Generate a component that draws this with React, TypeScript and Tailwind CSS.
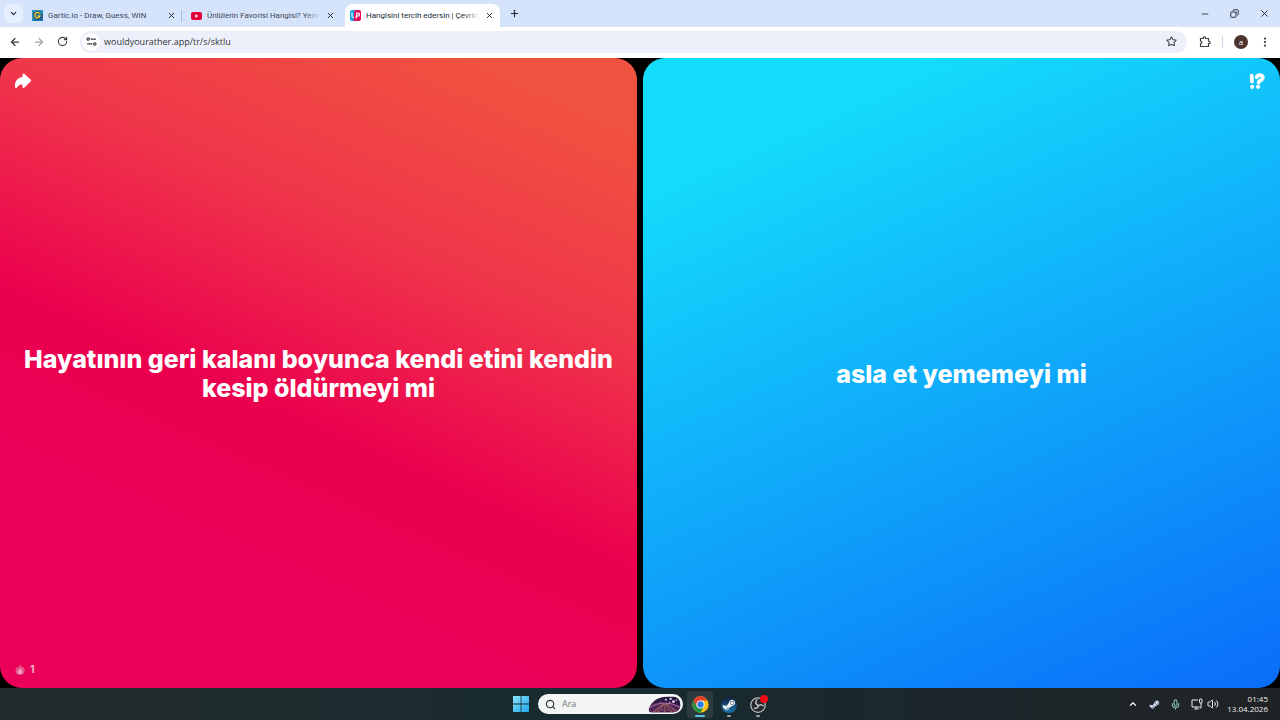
import { useState } from 'react'
import { ArrowLeft, ArrowRight, ChevronDown, ChevronUp, Copy, EllipsisVertical, Mic, Minus, Plus, RotateCw, Search, Star, Volume2, X } from 'lucide-react'
import { FaSteamSymbol } from 'react-icons/fa'
import clsx from 'clsx'

const tabs = [
  { id: 'gartic', title: 'Gartic.io - Draw, Guess, WIN' },
  { id: 'youtube', title: 'Ünlülerin Favorisi Hangisi? Yem' },
  { id: 'wyr', title: 'Hangisini tercih edersin | Çevrin' },
]

function Favicon({ id }: { id: string }) {
  if (id === 'gartic') {
    return (
      <svg viewBox="0 0 20 20" className="size-[11px] shrink-0" aria-hidden="true">
        <rect width="20" height="20" fill="#2b93bb" />
        <path d="M0 20 L20 5 V20 Z" fill="#1e6ca8" />
        <path d="M14 6.8 A4.8 4.8 0 1 0 14.5 11 H10.5" fill="none" stroke="#1b3040" strokeWidth="5" />
        <path d="M14 6.8 A4.8 4.8 0 1 0 14.5 11 H10.5" fill="none" stroke="#f5d648" strokeWidth="2.5" />
      </svg>
    )
  }
  if (id === 'youtube') {
    return (
      <svg viewBox="0 0 22 16" className="h-2 w-[11px] shrink-0" aria-hidden="true">
        <rect width="22" height="16" rx="4" fill="#e6003d" />
        <path d="M8.5 4.5 L15 8 L8.5 11.5 Z" fill="#fff" />
      </svg>
    )
  }
  return (
    <svg viewBox="0 0 22 22" className="size-[11px] shrink-0" aria-hidden="true">
      <rect width="12" height="22" rx="4" fill="#16a6ee" />
      <path d="M9 0 H18 A4 4 0 0 1 22 4 V18 A4 4 0 0 1 18 22 H7 Z" fill="#e80a58" />
      <path d="M4 5 V13 Q5 17 8 14" fill="none" stroke="#fff" strokeWidth="2" />
      <path d="M12 17 L14 6 H16 A3 3 0 0 1 16 12 H13" fill="none" stroke="#fff" strokeWidth="2.5" />
    </svg>
  )
}

function TabStrip() {
  const [active, setActive] = useState('wyr')

  return (
    <div className="flex h-[27px] items-center bg-[#d5e3fb] pl-1 text-[#202734]">
      <button type="button" aria-label="Search tabs" className="mr-1 flex size-[19px] items-center justify-center rounded-md bg-[#e6effd]">
        <ChevronDown className="size-[9px]" strokeWidth={3} />
      </button>
      <div className="flex items-center gap-1 self-end">
        {tabs.map((tab) => (
          <div
            key={tab.id}
            className={clsx(
              'relative flex h-[23px] w-[155px] items-center gap-1 pr-[5px] pl-[5px]',
              active === tab.id ? 'rounded-t-lg bg-white' : 'text-[#3f4858]'
            )}
          >
            <button type="button" onClick={() => setActive(tab.id)} className="flex min-w-0 flex-1 items-center gap-[5px] text-left">
              <Favicon id={tab.id} />
              <span className="flex-1 font-['Roboto','Noto_Sans',sans-serif] text-[8px] leading-3 whitespace-nowrap">{tab.title}</span>
            </button>
            {/* long titles fade out before the close button */}
            {tab.id !== 'gartic' && (
              <span
                className={clsx(
                  'pointer-events-none absolute right-5 h-3 w-4 bg-linear-to-r',
                  active === tab.id ? 'from-white/0 to-white' : 'from-[#d5e3fb]/0 to-[#d5e3fb]'
                )}
              />
            )}
            <button type="button" aria-label={`Close ${tab.title}`} className="flex size-3 items-center justify-center text-[#202734]">
              <X className="size-[9px]" strokeWidth={2.5} />
            </button>
            {tab.id === 'gartic' && <span className="absolute right-0 h-3 w-px bg-[#a9bbd8]" />}
          </div>
        ))}
      </div>
      <button type="button" aria-label="New tab" className="ml-2 flex size-3 items-center justify-center">
        <Plus className="size-[11px]" strokeWidth={2.5} />
      </button>
      <div className="ml-auto flex items-center gap-5 pr-[10px]">
        <button type="button" aria-label="Minimize"><Minus className="size-[10px]" /></button>
        <button type="button" aria-label="Restore"><Copy className="size-[9px] rotate-90" strokeWidth={2.5} /></button>
        <button type="button" aria-label="Close window"><X className="size-[11px]" /></button>
      </div>
    </div>
  )
}

function Toolbar() {
  return (
    <div className="flex h-[31px] items-center bg-white px-[9px] pb-[2px] text-[#3c3f44]">
      <div className="flex items-center gap-3">
        <button type="button" aria-label="Back"><ArrowLeft className="size-3" strokeWidth={2.5} /></button>
        <button type="button" aria-label="Forward" className="text-[#a4a6aa]"><ArrowRight className="size-3" strokeWidth={2.5} /></button>
        <button type="button" aria-label="Reload"><RotateCw className="size-[11px]" strokeWidth={2.5} /></button>
      </div>
      <div className="ml-3 flex h-[22px] flex-1 items-center rounded-full bg-[#edf0fa] pr-[10px] pl-[2px]">
        <button type="button" aria-label="Site information" className="flex size-[18px] items-center justify-center rounded-full bg-white">
          <svg viewBox="0 0 20 20" className="size-[11px]" fill="none" stroke="currentColor" strokeWidth="2.2" aria-hidden="true">
            <circle cx="4" cy="5.5" r="2.2" />
            <path d="M8.5 5.5 H18 M2 14.5 H11.5" />
            <circle cx="16" cy="14.5" r="2.2" />
          </svg>
        </button>
        <input
          aria-label="Address"
          defaultValue="wouldyourather.app/tr/s/sktlu"
          className="ml-1 min-w-0 flex-1 bg-transparent text-[9px] leading-4 text-[#33363b] outline-none"
        />
        <button type="button" aria-label="Bookmark"><Star className="size-[11px]" strokeWidth={2.2} /></button>
      </div>
      <div className="ml-3 flex items-center">
        <button type="button" aria-label="Extensions">
          <svg viewBox="0 0 24 24" className="size-3" fill="none" stroke="currentColor" strokeWidth="2.4" aria-hidden="true">
            <path d="M3 5 H8.500 V4 A2 2 0 0 1 13 4 V5 H19 V10.500 H20 A2 2 0 0 1 20 15 H19 V21 H3 V15.500 A2.500 2.500 0 0 0 3 10.500 Z" />
          </svg>
        </button>
        <span className="mx-[11px] h-3 w-px bg-[#cfd6e6]" />
        <button type="button" aria-label="Profile" className="flex size-[14px] items-center justify-center rounded-full bg-[#4e342e] text-[8px] leading-none text-white">a</button>
        <button type="button" aria-label="Menu" className="ml-[11px]"><EllipsisVertical className="size-3" strokeWidth={2.5} /></button>
      </div>
    </div>
  )
}

function Choices() {
  return (
    <main className="grid flex-1 grid-cols-2 gap-[6px] bg-black font-['Inter',sans-serif] text-white">
      <section className="relative flex rounded-[22px] bg-[linear-gradient(204deg,#f1523f_8%,#f0364a_32%,#eb004e_56%,#ea0059_78%)]">
        <button type="button" className="flex flex-1 items-center justify-center px-4 pt-[2px] text-center text-[25px] leading-[29px] font-extrabold">
          Hayatının geri kalanı boyunca kendi etini kendin kesip öldürmeyi mi
        </button>
        <button type="button" aria-label="Share" className="absolute top-[15px] left-[15px]">
          <svg viewBox="0 0 32 32" className="size-4" aria-hidden="true">
            <path d="M15 3 Q16 0 19 2 L31 13 Q33 15 31 17 L19 29 Q16 31 15 28 V23 C9 22 6 25 4 29 Q1 32 0 28 C-1 17 5 9 15 8 Z" fill="currentColor" />
          </svg>
        </button>
        <div className="absolute bottom-3 left-[15px] flex items-center gap-[5px] text-[11px] leading-[14px] font-semibold text-white/75">
          <svg viewBox="0 0 20 22" className="h-[11px] w-[10px]" aria-hidden="true">
            <path d="M9 0 C11 4 14 5 14 8 L16 5 C19 9 20 12 19 15 C18 20 14 22 10 22 C5 22 1 19 1 14 C1 10 3 8 4 5 L6 9 C8 6 9 4 9 0 Z" fill="#e0588c" />
            <path d="M10 8 C12 12 16 13 15 17 C13 21 6 21 5 17 C5 14 9 12 10 8 Z" fill="#f79cc0" />
          </svg>
          1
        </div>
      </section>
      <section className="relative flex rounded-[22px] bg-[linear-gradient(156deg,#14dcfb_14%,#0a6cf9_100%)]">
        <button type="button" className="flex flex-1 items-center justify-center px-4 pt-[2px] text-center text-[25px] leading-[29px] font-extrabold">
          asla et yememeyi mi
        </button>
        <button type="button" aria-label="Question info" className="absolute top-[15px] right-[15px]">
          <svg viewBox="0 0 30 30" className="size-4" fill="none" stroke="currentColor" aria-hidden="true">
            <path d="M5 5 L5.500 16" strokeWidth="7" strokeLinecap="round" />
            <path d="M14.500 8 C16 2 26 3 26 9 C26 14 18.500 13 18 18" strokeWidth="7" strokeLinecap="round" />
            <circle cx="6" cy="26" r="4" fill="currentColor" stroke="none" />
            <circle cx="17" cy="26" r="4" fill="currentColor" stroke="none" />
          </svg>
        </button>
      </section>
    </main>
  )
}

function SearchArt() {
  return (
    <svg viewBox="0 0 70 36" className="h-[17px] w-[35px] shrink-0" aria-hidden="true">
      <clipPath id="art"><path d="M2 28 C8 8 26 1 44 1 H52 A17 17 0 0 1 52 35 H8 Q1 34 2 28 Z" /></clipPath>
      <g clipPath="url(#art)">
        <rect width="70" height="36" fill="#2a1842" />
        <path d="M0 18 Q34 8 70 20 V36 H0 Z" fill="#4c2658" />
        <path d="M2 25 Q34 5 68 24" fill="none" stroke="#b878ad" strokeWidth="2" />
        <path d="M33 17 L8 36 M34 17 L20 36 M36 17 V36 M38 17 L51 36 M40 17 L66 36" stroke="#dc8c66" strokeWidth="1.500" />
        <path d="M12 34 Q36 22 62 34" fill="none" stroke="#7e3d55" strokeWidth="3" />
        <g fill="#e4d2f6"><circle cx="38" cy="8" r="2" /><circle cx="48" cy="6" r="2.500" /><circle cx="54" cy="12" r="3" /><circle cx="46" cy="13" r="1.500" /><circle cx="60" cy="9" r="1.500" /><circle cx="26" cy="12" r="1" /></g>
      </g>
    </svg>
  )
}

function ChromeLogo() {
  return (
    <svg viewBox="0 0 48 48" className="size-[17px]" aria-hidden="true">
      <circle cx="24" cy="24" r="23" fill="#fbc116" />
      <path d="M24 24 L14 29.800 L4.100 12.500 A23 23 0 0 0 24 47 L34 29.800 Z" fill="#229342" />
      <path d="M4.100 12.500 A23 23 0 0 1 43.900 12.500 H24 L14 18 L13 28 Z" fill="#e33b2e" />
      <circle cx="24" cy="24" r="11.500" fill="#fff" />
      <circle cx="24" cy="24" r="9" fill="#2b7bea" />
    </svg>
  )
}

function Taskbar() {
  return (
    <footer className="grid h-8 grid-cols-[1fr_auto_1fr] items-center bg-linear-to-r from-[#232c2c] via-[#172b30] to-[#202326] text-[#eef0f1]">
      <div className="col-start-2 flex items-center">
        <button type="button" aria-label="Start" className="mr-[9px]">
          <svg viewBox="0 0 16 16" className="size-4" aria-hidden="true">
            <linearGradient id="win" x2="1" y2="1">
              <stop stopColor="#8be3fc" />
              <stop offset="1" stopColor="#1ba7ee" />
            </linearGradient>
            <path d="M0 0 H7.600 V7.600 H0 Z M8.400 0 H16 V7.600 H8.400 Z M0 8.400 H7.600 V16 H0 Z M8.400 8.400 H16 V16 H8.400 Z" fill="url(#win)" />
          </svg>
        </button>
        <label className="mr-1 flex h-5 w-[145px] items-center rounded-full bg-[#f3f5f5] pr-px pl-[7px] text-[#33383a]">
          <Search className="size-[11px] shrink-0" strokeWidth={2.5} />
          <input aria-label="Ara" placeholder="Ara" className="ml-[6px] min-w-0 flex-1 bg-transparent text-[9px] outline-none placeholder:text-[#71767a]" />
          <SearchArt />
        </label>
        <button type="button" aria-label="Chrome" className="flex h-[27px] w-[26px] flex-col items-center justify-end gap-[2px] rounded-sm bg-[#2b3b40] pb-px">
          <ChromeLogo />
          <span className="h-[2px] w-[10px] rounded-full bg-[#5bc1ec]" />
        </button>
        <button type="button" aria-label="Steam" className="ml-2 flex h-[27px] w-4 flex-col items-center justify-end gap-[2px] pb-px">
          <span className="flex size-4 items-center justify-center rounded-full bg-linear-to-b from-[#0d2141] to-[#1b76ae]">
            <FaSteamSymbol className="size-[14px]" />
          </span>
          <span className="h-[2px] w-1 rounded-full bg-[#9ca5a7]" />
        </button>
        <button type="button" aria-label="OBS" className="relative ml-3 flex h-[27px] w-[18px] flex-col items-center justify-end gap-[2px] pb-px">
          <svg viewBox="0 0 32 32" className="size-4" fill="none" stroke="#b9bdbf" aria-hidden="true">
            <circle cx="16" cy="16" r="14.500" strokeWidth="2.500" fill="#24282a" />
            <path d="M15 5 C9 9 12 16 16 16 M27 18 C22 13 17 16 17 19 M8 22 C15 24 18 19 15 16" strokeWidth="3" />
          </svg>
          <span className="h-[2px] w-1 rounded-full bg-[#9ca5a7]" />
          <span className="absolute top-1 -right-px size-2 rounded-full bg-[#ef0b12]" />
        </button>
      </div>
      <div className="flex items-center justify-end pr-3">
        <button type="button" aria-label="Hidden icons"><ChevronUp className="size-[10px]" strokeWidth={3} /></button>
        <FaSteamSymbol className="ml-[11px] size-[11px] text-[#d3dcfa]" />
        <Mic className="ml-[10px] size-[11px] text-[#82b9ae]" strokeWidth={2.5} />
        <svg viewBox="0 0 24 24" className="ml-[10px] size-3" fill="none" stroke="currentColor" strokeWidth="2" aria-hidden="true">
          <path d="M14 4 H2 V18 H17 M7 22 H15 M10 18 V22 M20 10 V20 H17" />
          <rect x="17" y="2" width="5" height="8" rx="1" />
        </svg>
        <Volume2 className="ml-1 size-3" />
        <div className="ml-2 text-right text-[8px] leading-[10px]">
          <div>01:45</div>
          <div>13.04.2026</div>
        </div>
      </div>
    </footer>
  )
}

export default function App() {
  return (
    <div className="flex min-h-screen flex-col font-['Open_Sans','Noto_Sans',sans-serif]">
      <header>
        <TabStrip />
        <Toolbar />
      </header>
      <Choices />
      <Taskbar />
    </div>
  )
}
